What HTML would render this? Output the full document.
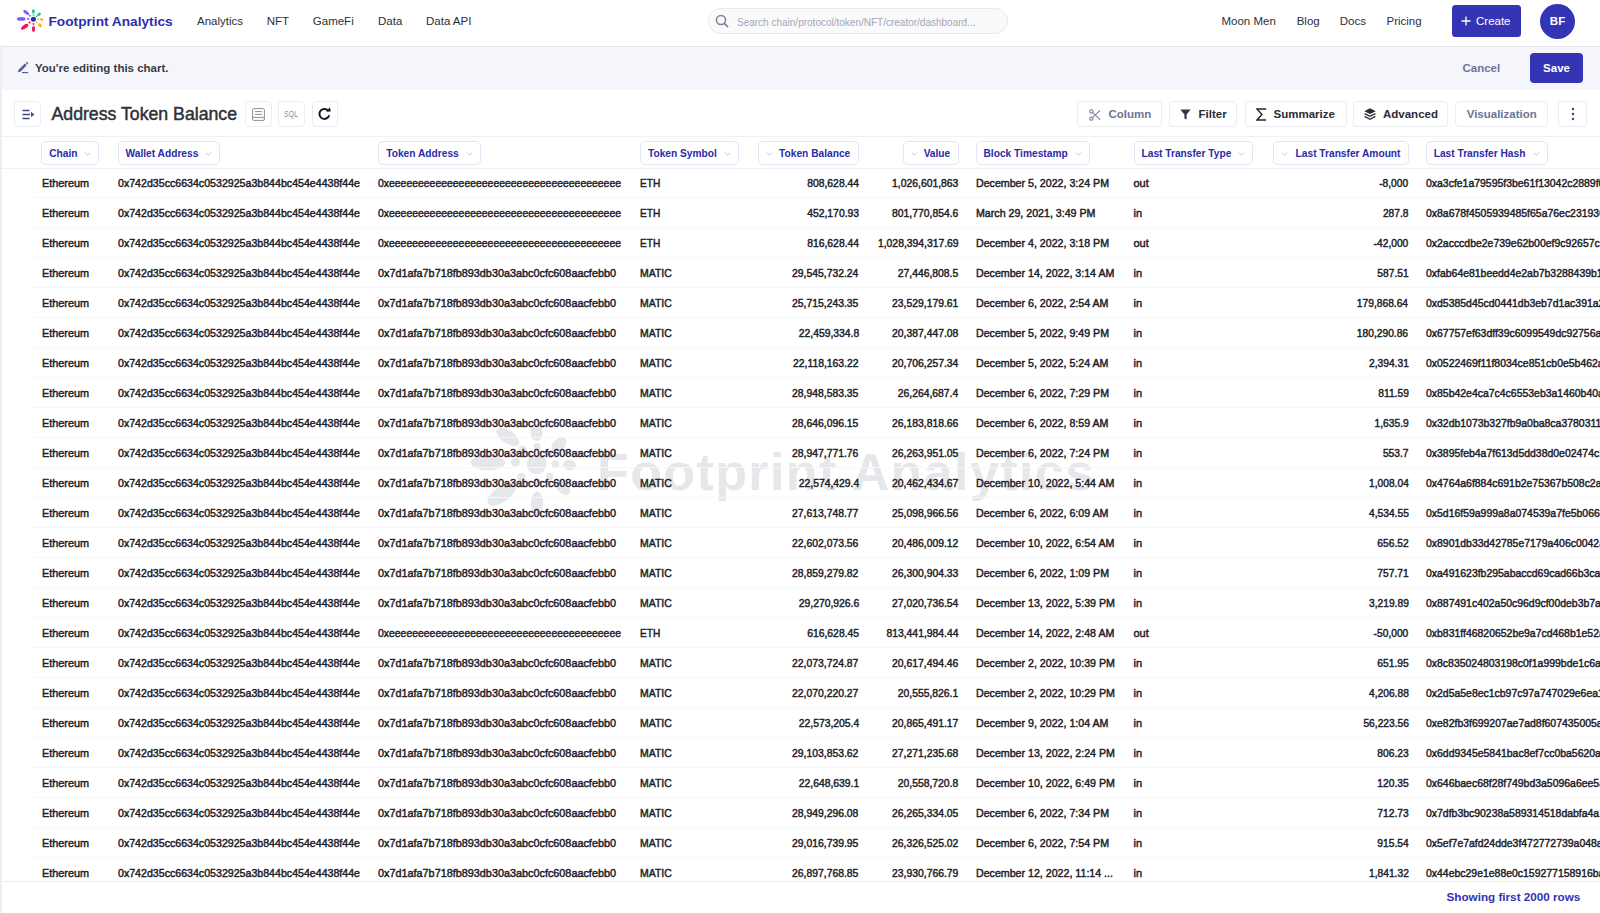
<!DOCTYPE html><html><head><meta charset="utf-8"><style>*{margin:0;padding:0;box-sizing:border-box}
html,body{width:1600px;height:913px;overflow:hidden;background:#fff;font-family:"Liberation Sans",sans-serif;position:relative}
.abs{position:absolute}
#nav{position:absolute;left:0;top:0;width:1600px;height:47px;background:#fff;border-bottom:1px solid #e6e7eb}
.nv{position:absolute;top:14px;font-size:11.5px;line-height:14px;color:#2c2f38;white-space:nowrap}
#banner{position:absolute;left:0;top:47px;width:1600px;height:43px;background:#f5f6fc}
#leftstrip{position:absolute;left:0;top:47px;width:1.6px;height:866px;background:#eeeff4}
#titlebar{position:absolute;left:2px;top:90px;width:1598px;height:47px;background:#fff;border-bottom:1px solid #f0f0f3}
.ib{position:absolute;top:100.5px;width:26.5px;height:26.5px;border:1px solid #ececf2;border-radius:4px;background:#fff}
.tb{position:absolute;top:101px;height:26px;border:1px solid #ebebf2;border-radius:4px;background:#fff;font-size:11.5px;font-weight:bold;line-height:24px;white-space:nowrap}
.hb{position:absolute;top:141px;height:24px;border:1px solid #e4e4f7;border-radius:5px;background:#fff}
.ht{position:absolute;top:4.7px;font-size:10.2px;font-weight:bold;line-height:14px;color:#2a2aaa;white-space:nowrap}
.hc{position:absolute;top:8.6px;line-height:0}
#hdrline{position:absolute;left:2px;top:168px;width:1598px;height:1px;background:#f2f2f5}
.row{position:absolute;left:33px;width:1567px;height:30px;border-bottom:1px solid #f7f7f9}
.c{position:absolute;top:0;font-size:11px;line-height:30px;color:#1e2028;white-space:nowrap;-webkit-text-stroke:0.45px #1e2028}
.row .c{margin-left:-33px}
#clipper{position:absolute;left:0;top:169px;width:1600px;height:712px;overflow:hidden}
#footer{position:absolute;left:2px;top:881px;width:1598px;height:32px;background:#fff;border-top:1px solid #ececf0}
.tbt{top:107px;font-size:11.5px;font-weight:bold;line-height:14px;white-space:nowrap}
</style></head><body>
<div id="nav">
 <svg class="abs" style="left:14px;top:5px" width="32" height="30" viewBox="0 0 32 30"><ellipse cx="19.40" cy="14.30" rx="2.5" ry="2.5" transform="rotate(0 19.40 14.30)" fill="#2b2ba6"/><ellipse cx="7.20" cy="13.90" rx="4.3" ry="1.9" transform="rotate(0 7.20 13.90)" fill="#7c5cf6"/><ellipse cx="14.10" cy="13.80" rx="1.1" ry="1.1" transform="rotate(0 14.10 13.80)" fill="#7c5cf6"/><ellipse cx="12.20" cy="7.50" rx="3.3" ry="1.6" transform="rotate(35 12.20 7.50)" fill="#7c5cf6"/><ellipse cx="15.90" cy="10.70" rx="1.0" ry="1.0" transform="rotate(0 15.90 10.70)" fill="#7c5cf6"/><ellipse cx="19.40" cy="6.40" rx="1.5" ry="2.2" transform="rotate(0 19.40 6.40)" fill="#1fc9a4"/><ellipse cx="19.50" cy="9.90" rx="0.9" ry="0.9" transform="rotate(0 19.50 9.90)" fill="#1fc9a4"/><ellipse cx="25.00" cy="9.40" rx="2.2" ry="1.4" transform="rotate(-40 25.00 9.40)" fill="#1fc9a4"/><ellipse cx="22.50" cy="11.50" rx="0.9" ry="0.9" transform="rotate(0 22.50 11.50)" fill="#1fc9a4"/><ellipse cx="27.60" cy="14.50" rx="1.6" ry="1.3" transform="rotate(0 27.60 14.50)" fill="#f8b400"/><ellipse cx="24.10" cy="14.30" rx="0.9" ry="0.9" transform="rotate(0 24.10 14.30)" fill="#f8b400"/><ellipse cx="26.00" cy="20.20" rx="2.2" ry="1.4" transform="rotate(45 26.00 20.20)" fill="#f8b400"/><ellipse cx="22.70" cy="17.40" rx="0.9" ry="0.9" transform="rotate(0 22.70 17.40)" fill="#f8b400"/><ellipse cx="19.50" cy="24.10" rx="1.5" ry="3.0" transform="rotate(0 19.50 24.10)" fill="#f5145a"/><ellipse cx="19.50" cy="18.90" rx="1.0" ry="1.0" transform="rotate(0 19.50 18.90)" fill="#f5145a"/><ellipse cx="10.70" cy="21.80" rx="4.2" ry="1.9" transform="rotate(-35 10.70 21.80)" fill="#f5145a"/><ellipse cx="15.60" cy="17.60" rx="1.1" ry="1.1" transform="rotate(0 15.60 17.60)" fill="#f5145a"/></svg>
 <div class="abs" style="left:48.5px;top:13.8px;font-size:13.7px;font-weight:bold;line-height:16px;color:#2e2eae;white-space:nowrap">Footprint Analytics</div>
 <div class="nv" style="left:197px">Analytics</div>
 <div class="nv" style="left:266.7px">NFT</div>
 <div class="nv" style="left:312.8px">GameFi</div>
 <div class="nv" style="left:378px">Data</div>
 <div class="nv" style="left:426px">Data API</div>
 <div class="abs" style="left:708px;top:8px;width:300px;height:26px;border:1px solid #e8e9ee;border-radius:13px;background:#fafafb"></div>
 <svg class="abs" style="left:715px;top:14px" width="14" height="14" viewBox="0 0 14 14"><circle cx="6" cy="6" r="4.6" fill="none" stroke="#7a819a" stroke-width="1.5"/><path d="M9.4 9.4 L12.6 12.6" stroke="#7a819a" stroke-width="1.6" stroke-linecap="round"/></svg>
 <div class="abs" style="left:737px;top:16.5px;font-size:10px;line-height:12px;color:#a3a7b5;white-space:nowrap">Search chain/protocol/token/NFT/creator/dashboard...</div>
 <div class="nv" style="left:1221.5px">Moon Men</div>
 <div class="nv" style="left:1296.7px">Blog</div>
 <div class="nv" style="left:1339.8px">Docs</div>
 <div class="nv" style="left:1386.5px">Pricing</div>
 <div class="abs" style="left:1452px;top:4.8px;width:69px;height:32.2px;background:#3434b4;border-radius:3.5px"></div>
 <svg class="abs" style="left:1461px;top:16px" width="10" height="10" viewBox="0 0 10 10"><path d="M5 0.5V9.5M0.5 5H9.5" stroke="#fff" stroke-width="1.3"/></svg>
 <div class="abs" style="left:1476px;top:14px;font-size:11.5px;line-height:14px;color:#fff;white-space:nowrap">Create</div>
 <div class="abs" style="left:1540px;top:3.75px;width:35px;height:35px;border-radius:50%;background:#3434b4"></div>
 <div class="abs" style="left:1540px;top:14px;width:35px;text-align:center;font-size:11.5px;font-weight:bold;line-height:14px;color:#fff">BF</div>
</div>
<div id="banner">
 <svg class="abs" style="left:17px;top:14px" width="13" height="13" viewBox="0 0 13 13"><path d="M1 11.3 L1.5 8.8 L7.9 2.4 L9.8 4.3 L3.4 10.7 Z" fill="#56618c"/><path d="M8.7 1.6 L9.6 0.7 L11.5 2.6 L10.6 3.5 Z" fill="#56618c"/><path d="M5 11.6 H11.2" stroke="#56618c" stroke-width="1.2"/></svg>
 <div class="abs" style="left:35px;top:15px;font-size:11.5px;font-weight:bold;line-height:13px;color:#3a3c44;white-space:nowrap">You're editing this chart.</div>
 <div class="abs" style="left:1462.5px;top:15px;font-size:11.5px;font-weight:bold;line-height:13px;color:#6b7796;white-space:nowrap">Cancel</div>
 <div class="abs" style="left:1530px;top:6px;width:53px;height:30px;background:#3434b4;border-radius:4px"></div>
 <div class="abs" style="left:1530px;top:15px;width:53px;text-align:center;font-size:11.5px;font-weight:bold;line-height:13px;color:#fff">Save</div>
</div>
<div id="leftstrip"></div>
<div id="titlebar"></div>
<div class="ib" style="left:14px"></div>
<svg class="abs" style="left:21.5px;top:108.5px" width="14" height="12" viewBox="0 0 14 12"><path d="M0.5 1.5H7.5M0.5 5.5H8M0.5 9.5H7.5" stroke="#3b4a8a" stroke-width="1.3"/><path d="M9 3 L12.5 5.5 L9 8 Z" fill="#3b4a8a"/></svg>
<div class="abs" style="left:51.5px;top:104px;font-size:17.7px;line-height:20px;color:#2f3036;white-space:nowrap;-webkit-text-stroke:0.45px #2f3036">Address Token Balance</div>
<div class="ib" style="left:245px"></div>
<svg class="abs" style="left:252px;top:108px" width="13" height="13" viewBox="0 0 13 13"><rect x="0.6" y="0.6" width="11.8" height="11.8" rx="1.2" fill="none" stroke="#8e8e98" stroke-width="1"/><path d="M3 3.6H10M3 6.4H10M0.6 9.4H12.4" stroke="#8e8e98" stroke-width="1"/></svg>
<div class="ib" style="left:278.2px"></div>
<div class="abs" style="left:284px;top:110px;font-size:8.5px;line-height:9px;color:#8e8e98;white-space:nowrap;transform:scaleX(0.8);transform-origin:0 0;letter-spacing:0.2px">SQL</div>
<div class="ib" style="left:311.5px"></div>
<svg class="abs" style="left:317px;top:106px" width="15" height="15" viewBox="0 0 15 15"><path d="M11.6 5.2 A5 5 0 1 0 12.2 9.3" fill="none" stroke="#141a2a" stroke-width="2"/><path d="M9.2 5.6 L13.8 5.6 L12.9 1.2 Z" fill="#141a2a"/></svg>
<div class="tb" style="left:1077.3px;width:85px;color:#6b7596"></div>
<svg class="abs" style="left:1088.8px;top:108.5px" width="12" height="12" viewBox="0 0 13 13"><circle cx="2.6" cy="2.6" r="1.8" fill="none" stroke="#6b7596" stroke-width="1.1"/><circle cx="2.6" cy="10.4" r="1.8" fill="none" stroke="#6b7596" stroke-width="1.1"/><path d="M4 3.8 L12 11.5 M4 9.2 L12 1.5" stroke="#6b7596" stroke-width="1.1"/></svg>
<div class="abs tbt" style="left:1108.5px;color:#6b7596">Column</div>
<div class="tb" style="left:1169.4px;width:68px"></div>
<svg class="abs" style="left:1180px;top:109px" width="11" height="11" viewBox="0 0 11 11"><path d="M0.3 0.5 H10.7 L6.6 5.4 V10.5 L4.4 9.5 V5.4 Z" fill="#34363e"/></svg>
<div class="abs tbt" style="left:1198.6px;color:#2a2c34">Filter</div>
<div class="tb" style="left:1244.5px;width:102px"></div>
<svg class="abs" style="left:1255.5px;top:107.5px" width="11" height="13" viewBox="0 0 11 13"><path d="M10.2 1H1 L6 6.5 L1 12H10.2" fill="none" stroke="#24262e" stroke-width="1.4"/></svg>
<div class="abs tbt" style="left:1273.5px;color:#2a2c34">Summarize</div>
<div class="tb" style="left:1353.3px;width:95px"></div>
<svg class="abs" style="left:1363.5px;top:108px" width="12" height="12" viewBox="0 0 12 12"><path d="M6 0.3 L11.7 3.2 L6 6.1 L0.3 3.2 Z" fill="#2a2c34"/><path d="M0.6 5.6 L6 8.4 L11.4 5.6" fill="none" stroke="#2a2c34" stroke-width="1.2"/><path d="M0.6 8.4 L6 11.2 L11.4 8.4" fill="none" stroke="#2a2c34" stroke-width="1.2"/></svg>
<div class="abs tbt" style="left:1383px;color:#2a2c34">Advanced</div>
<div class="tb" style="left:1455.4px;width:93px"></div>
<div class="abs tbt" style="left:1466.7px;color:#6b7596">Visualization</div>
<div class="tb" style="left:1558px;width:29px"></div>
<svg class="abs" style="left:1570.5px;top:107px" width="4" height="14" viewBox="0 0 4 14"><circle cx="2" cy="2" r="1.2" fill="#3b4470"/><circle cx="2" cy="7" r="1.2" fill="#3b4470"/><circle cx="2" cy="12" r="1.2" fill="#3b4470"/></svg>
<svg class="abs" style="left:458.9px;top:407.3px" width="128" height="120" viewBox="0 0 32 30" style="overflow:visible"><g transform="scale(1)"><ellipse cx="19.40" cy="14.30" rx="2.5" ry="2.5" transform="rotate(0 19.40 14.30)" fill="#e6e7ea"/><ellipse cx="7.20" cy="13.90" rx="4.3" ry="1.9" transform="rotate(0 7.20 13.90)" fill="#e6e7ea"/><ellipse cx="14.10" cy="13.80" rx="1.1" ry="1.1" transform="rotate(0 14.10 13.80)" fill="#e6e7ea"/><ellipse cx="12.20" cy="7.50" rx="3.3" ry="1.6" transform="rotate(35 12.20 7.50)" fill="#e6e7ea"/><ellipse cx="15.90" cy="10.70" rx="1.0" ry="1.0" transform="rotate(0 15.90 10.70)" fill="#e6e7ea"/><ellipse cx="19.40" cy="6.40" rx="1.5" ry="2.2" transform="rotate(0 19.40 6.40)" fill="#e6e7ea"/><ellipse cx="19.50" cy="9.90" rx="0.9" ry="0.9" transform="rotate(0 19.50 9.90)" fill="#e6e7ea"/><ellipse cx="25.00" cy="9.40" rx="2.2" ry="1.4" transform="rotate(-40 25.00 9.40)" fill="#e6e7ea"/><ellipse cx="22.50" cy="11.50" rx="0.9" ry="0.9" transform="rotate(0 22.50 11.50)" fill="#e6e7ea"/><ellipse cx="27.60" cy="14.50" rx="1.6" ry="1.3" transform="rotate(0 27.60 14.50)" fill="#e6e7ea"/><ellipse cx="24.10" cy="14.30" rx="0.9" ry="0.9" transform="rotate(0 24.10 14.30)" fill="#e6e7ea"/><ellipse cx="26.00" cy="20.20" rx="2.2" ry="1.4" transform="rotate(45 26.00 20.20)" fill="#e6e7ea"/><ellipse cx="22.70" cy="17.40" rx="0.9" ry="0.9" transform="rotate(0 22.70 17.40)" fill="#e6e7ea"/><ellipse cx="19.50" cy="24.10" rx="1.5" ry="3.0" transform="rotate(0 19.50 24.10)" fill="#e6e7ea"/><ellipse cx="19.50" cy="18.90" rx="1.0" ry="1.0" transform="rotate(0 19.50 18.90)" fill="#e6e7ea"/><ellipse cx="10.70" cy="21.80" rx="4.2" ry="1.9" transform="rotate(-35 10.70 21.80)" fill="#e6e7ea"/><ellipse cx="15.60" cy="17.60" rx="1.1" ry="1.1" transform="rotate(0 15.60 17.60)" fill="#e6e7ea"/></g></svg>
<div class="abs" style="left:597px;top:444px;font-size:52px;font-weight:bold;line-height:56px;color:#e6e7ea;white-space:nowrap;letter-spacing:1.4px">Footprint Analytics</div>

<div class="hb" style="left:41.25px;width:57.25px"><span class="ht" style="left:7px">Chain</span><span class="hc" style="right:7px"><svg class="chev" width="7" height="4" viewBox="0 0 7 4"><path d="M0.8 0.6 L3.5 3.2 L6.2 0.6" fill="none" stroke="#c4c4e0" stroke-width="1"/></svg></span></div>
<div class="hb" style="left:117.5px;width:102.5px"><span class="ht" style="left:7px">Wallet Address</span><span class="hc" style="right:7px"><svg class="chev" width="7" height="4" viewBox="0 0 7 4"><path d="M0.8 0.6 L3.5 3.2 L6.2 0.6" fill="none" stroke="#c4c4e0" stroke-width="1"/></svg></span></div>
<div class="hb" style="left:378.25px;width:102.25px"><span class="ht" style="left:7px">Token Address</span><span class="hc" style="right:7px"><svg class="chev" width="7" height="4" viewBox="0 0 7 4"><path d="M0.8 0.6 L3.5 3.2 L6.2 0.6" fill="none" stroke="#c4c4e0" stroke-width="1"/></svg></span></div>
<div class="hb" style="left:640px;width:98.75px"><span class="ht" style="left:7px">Token Symbol</span><span class="hc" style="right:7px"><svg class="chev" width="7" height="4" viewBox="0 0 7 4"><path d="M0.8 0.6 L3.5 3.2 L6.2 0.6" fill="none" stroke="#c4c4e0" stroke-width="1"/></svg></span></div>
<div class="hb" style="left:758px;width:100.75px"><span class="hc" style="left:7px"><svg class="chev" width="7" height="4" viewBox="0 0 7 4"><path d="M0.8 0.6 L3.5 3.2 L6.2 0.6" fill="none" stroke="#c4c4e0" stroke-width="1"/></svg></span><span class="ht" style="right:7.5px">Token Balance</span></div>
<div class="hb" style="left:902.5px;width:56.25px"><span class="hc" style="left:7px"><svg class="chev" width="7" height="4" viewBox="0 0 7 4"><path d="M0.8 0.6 L3.5 3.2 L6.2 0.6" fill="none" stroke="#c4c4e0" stroke-width="1"/></svg></span><span class="ht" style="right:7.5px">Value</span></div>
<div class="hb" style="left:975.5px;width:114.0px"><span class="ht" style="left:7px">Block Timestamp</span><span class="hc" style="right:7px"><svg class="chev" width="7" height="4" viewBox="0 0 7 4"><path d="M0.8 0.6 L3.5 3.2 L6.2 0.6" fill="none" stroke="#c4c4e0" stroke-width="1"/></svg></span></div>
<div class="hb" style="left:1133.5px;width:119.5px"><span class="ht" style="left:7px">Last Transfer Type</span><span class="hc" style="right:7px"><svg class="chev" width="7" height="4" viewBox="0 0 7 4"><path d="M0.8 0.6 L3.5 3.2 L6.2 0.6" fill="none" stroke="#c4c4e0" stroke-width="1"/></svg></span></div>
<div class="hb" style="left:1272.5px;width:136.5px"><span class="hc" style="left:7px"><svg class="chev" width="7" height="4" viewBox="0 0 7 4"><path d="M0.8 0.6 L3.5 3.2 L6.2 0.6" fill="none" stroke="#c4c4e0" stroke-width="1"/></svg></span><span class="ht" style="right:7.5px">Last Transfer Amount</span></div>
<div class="hb" style="left:1425.7px;width:122.29999999999995px"><span class="ht" style="left:7px">Last Transfer Hash</span><span class="hc" style="right:7px"><svg class="chev" width="7" height="4" viewBox="0 0 7 4"><path d="M0.8 0.6 L3.5 3.2 L6.2 0.6" fill="none" stroke="#c4c4e0" stroke-width="1"/></svg></span></div>
<div id="hdrline"></div>
<div class="row" style="top:168px">
<span class="c" style="left:42px;transform:scaleX(0.985);transform-origin:0 50%">Ethereum</span>
<span class="c" style="left:117.5px;transform:scaleX(0.965);transform-origin:0 50%">0x742d35cc6634c0532925a3b844bc454e4438f44e</span>
<span class="c" style="left:378px;transform:scaleX(0.948);transform-origin:0 50%">0xeeeeeeeeeeeeeeeeeeeeeeeeeeeeeeeeeeeeeeee</span>
<span class="c" style="left:640px;transform:scaleX(0.923);transform-origin:0 50%">ETH</span>
<span class="c" style="right:741.25px;transform:scaleX(0.942);transform-origin:100% 50%">808,628.44</span>
<span class="c" style="right:641.5px;transform:scaleX(0.942);transform-origin:100% 50%">1,026,601,863</span>
<span class="c" style="left:975.5px;transform:scaleX(0.967);transform-origin:0 50%">December 5, 2022, 3:24 PM</span>
<span class="c" style="left:1133.5px;transform:scaleX(1.0);transform-origin:0 50%">out</span>
<span class="c" style="right:191.5px;transform:scaleX(0.93);transform-origin:100% 50%">-8,000</span>
<span class="c" style="left:1425.7px;transform:scaleX(0.95);transform-origin:0 50%">0xa3cfe1a79595f3be61f13042c2889f0b</span>
</div>
<div class="row" style="top:198px">
<span class="c" style="left:42px;transform:scaleX(0.985);transform-origin:0 50%">Ethereum</span>
<span class="c" style="left:117.5px;transform:scaleX(0.965);transform-origin:0 50%">0x742d35cc6634c0532925a3b844bc454e4438f44e</span>
<span class="c" style="left:378px;transform:scaleX(0.948);transform-origin:0 50%">0xeeeeeeeeeeeeeeeeeeeeeeeeeeeeeeeeeeeeeeee</span>
<span class="c" style="left:640px;transform:scaleX(0.923);transform-origin:0 50%">ETH</span>
<span class="c" style="right:741.25px;transform:scaleX(0.942);transform-origin:100% 50%">452,170.93</span>
<span class="c" style="right:641.5px;transform:scaleX(0.942);transform-origin:100% 50%">801,770,854.6</span>
<span class="c" style="left:975.5px;transform:scaleX(0.967);transform-origin:0 50%">March 29, 2021, 3:49 PM</span>
<span class="c" style="left:1133.5px;transform:scaleX(1.0);transform-origin:0 50%">in</span>
<span class="c" style="right:191.5px;transform:scaleX(0.93);transform-origin:100% 50%">287.8</span>
<span class="c" style="left:1425.7px;transform:scaleX(0.95);transform-origin:0 50%">0x8a678f4505939485f65a76ec231930ab</span>
</div>
<div class="row" style="top:228px">
<span class="c" style="left:42px;transform:scaleX(0.985);transform-origin:0 50%">Ethereum</span>
<span class="c" style="left:117.5px;transform:scaleX(0.965);transform-origin:0 50%">0x742d35cc6634c0532925a3b844bc454e4438f44e</span>
<span class="c" style="left:378px;transform:scaleX(0.948);transform-origin:0 50%">0xeeeeeeeeeeeeeeeeeeeeeeeeeeeeeeeeeeeeeeee</span>
<span class="c" style="left:640px;transform:scaleX(0.923);transform-origin:0 50%">ETH</span>
<span class="c" style="right:741.25px;transform:scaleX(0.942);transform-origin:100% 50%">816,628.44</span>
<span class="c" style="right:641.5px;transform:scaleX(0.942);transform-origin:100% 50%">1,028,394,317.69</span>
<span class="c" style="left:975.5px;transform:scaleX(0.967);transform-origin:0 50%">December 4, 2022, 3:18 PM</span>
<span class="c" style="left:1133.5px;transform:scaleX(1.0);transform-origin:0 50%">out</span>
<span class="c" style="right:191.5px;transform:scaleX(0.93);transform-origin:100% 50%">-42,000</span>
<span class="c" style="left:1425.7px;transform:scaleX(0.95);transform-origin:0 50%">0x2acccdbe2e739e62b00ef9c92657c1ab</span>
</div>
<div class="row" style="top:258px">
<span class="c" style="left:42px;transform:scaleX(0.985);transform-origin:0 50%">Ethereum</span>
<span class="c" style="left:117.5px;transform:scaleX(0.965);transform-origin:0 50%">0x742d35cc6634c0532925a3b844bc454e4438f44e</span>
<span class="c" style="left:378px;transform:scaleX(0.985);transform-origin:0 50%">0x7d1afa7b718fb893db30a3abc0cfc608aacfebb0</span>
<span class="c" style="left:640px;transform:scaleX(0.95);transform-origin:0 50%">MATIC</span>
<span class="c" style="right:741.25px;transform:scaleX(0.942);transform-origin:100% 50%">29,545,732.24</span>
<span class="c" style="right:641.5px;transform:scaleX(0.942);transform-origin:100% 50%">27,446,808.5</span>
<span class="c" style="left:975.5px;transform:scaleX(0.967);transform-origin:0 50%">December 14, 2022, 3:14 AM</span>
<span class="c" style="left:1133.5px;transform:scaleX(1.0);transform-origin:0 50%">in</span>
<span class="c" style="right:191.5px;transform:scaleX(0.93);transform-origin:100% 50%">587.51</span>
<span class="c" style="left:1425.7px;transform:scaleX(0.95);transform-origin:0 50%">0xfab64e81beedd4e2ab7b3288439b1c2d</span>
</div>
<div class="row" style="top:288px">
<span class="c" style="left:42px;transform:scaleX(0.985);transform-origin:0 50%">Ethereum</span>
<span class="c" style="left:117.5px;transform:scaleX(0.965);transform-origin:0 50%">0x742d35cc6634c0532925a3b844bc454e4438f44e</span>
<span class="c" style="left:378px;transform:scaleX(0.985);transform-origin:0 50%">0x7d1afa7b718fb893db30a3abc0cfc608aacfebb0</span>
<span class="c" style="left:640px;transform:scaleX(0.95);transform-origin:0 50%">MATIC</span>
<span class="c" style="right:741.25px;transform:scaleX(0.942);transform-origin:100% 50%">25,715,243.35</span>
<span class="c" style="right:641.5px;transform:scaleX(0.942);transform-origin:100% 50%">23,529,179.61</span>
<span class="c" style="left:975.5px;transform:scaleX(0.967);transform-origin:0 50%">December 6, 2022, 2:54 AM</span>
<span class="c" style="left:1133.5px;transform:scaleX(1.0);transform-origin:0 50%">in</span>
<span class="c" style="right:191.5px;transform:scaleX(0.93);transform-origin:100% 50%">179,868.64</span>
<span class="c" style="left:1425.7px;transform:scaleX(0.95);transform-origin:0 50%">0xd5385d45cd0441db3eb7d1ac391a2b3c</span>
</div>
<div class="row" style="top:318px">
<span class="c" style="left:42px;transform:scaleX(0.985);transform-origin:0 50%">Ethereum</span>
<span class="c" style="left:117.5px;transform:scaleX(0.965);transform-origin:0 50%">0x742d35cc6634c0532925a3b844bc454e4438f44e</span>
<span class="c" style="left:378px;transform:scaleX(0.985);transform-origin:0 50%">0x7d1afa7b718fb893db30a3abc0cfc608aacfebb0</span>
<span class="c" style="left:640px;transform:scaleX(0.95);transform-origin:0 50%">MATIC</span>
<span class="c" style="right:741.25px;transform:scaleX(0.942);transform-origin:100% 50%">22,459,334.8</span>
<span class="c" style="right:641.5px;transform:scaleX(0.942);transform-origin:100% 50%">20,387,447.08</span>
<span class="c" style="left:975.5px;transform:scaleX(0.967);transform-origin:0 50%">December 5, 2022, 9:49 PM</span>
<span class="c" style="left:1133.5px;transform:scaleX(1.0);transform-origin:0 50%">in</span>
<span class="c" style="right:191.5px;transform:scaleX(0.93);transform-origin:100% 50%">180,290.86</span>
<span class="c" style="left:1425.7px;transform:scaleX(0.95);transform-origin:0 50%">0x67757ef63dff39c6099549dc92756a1b</span>
</div>
<div class="row" style="top:348px">
<span class="c" style="left:42px;transform:scaleX(0.985);transform-origin:0 50%">Ethereum</span>
<span class="c" style="left:117.5px;transform:scaleX(0.965);transform-origin:0 50%">0x742d35cc6634c0532925a3b844bc454e4438f44e</span>
<span class="c" style="left:378px;transform:scaleX(0.985);transform-origin:0 50%">0x7d1afa7b718fb893db30a3abc0cfc608aacfebb0</span>
<span class="c" style="left:640px;transform:scaleX(0.95);transform-origin:0 50%">MATIC</span>
<span class="c" style="right:741.25px;transform:scaleX(0.942);transform-origin:100% 50%">22,118,163.22</span>
<span class="c" style="right:641.5px;transform:scaleX(0.942);transform-origin:100% 50%">20,706,257.34</span>
<span class="c" style="left:975.5px;transform:scaleX(0.967);transform-origin:0 50%">December 5, 2022, 5:24 AM</span>
<span class="c" style="left:1133.5px;transform:scaleX(1.0);transform-origin:0 50%">in</span>
<span class="c" style="right:191.5px;transform:scaleX(0.93);transform-origin:100% 50%">2,394.31</span>
<span class="c" style="left:1425.7px;transform:scaleX(0.95);transform-origin:0 50%">0x0522469f11f8034ce851cb0e5b462a1b</span>
</div>
<div class="row" style="top:378px">
<span class="c" style="left:42px;transform:scaleX(0.985);transform-origin:0 50%">Ethereum</span>
<span class="c" style="left:117.5px;transform:scaleX(0.965);transform-origin:0 50%">0x742d35cc6634c0532925a3b844bc454e4438f44e</span>
<span class="c" style="left:378px;transform:scaleX(0.985);transform-origin:0 50%">0x7d1afa7b718fb893db30a3abc0cfc608aacfebb0</span>
<span class="c" style="left:640px;transform:scaleX(0.95);transform-origin:0 50%">MATIC</span>
<span class="c" style="right:741.25px;transform:scaleX(0.942);transform-origin:100% 50%">28,948,583.35</span>
<span class="c" style="right:641.5px;transform:scaleX(0.942);transform-origin:100% 50%">26,264,687.4</span>
<span class="c" style="left:975.5px;transform:scaleX(0.967);transform-origin:0 50%">December 6, 2022, 7:29 PM</span>
<span class="c" style="left:1133.5px;transform:scaleX(1.0);transform-origin:0 50%">in</span>
<span class="c" style="right:191.5px;transform:scaleX(0.93);transform-origin:100% 50%">811.59</span>
<span class="c" style="left:1425.7px;transform:scaleX(0.95);transform-origin:0 50%">0x85b42e4ca7c4c6553eb3a1460b40a1b2</span>
</div>
<div class="row" style="top:408px">
<span class="c" style="left:42px;transform:scaleX(0.985);transform-origin:0 50%">Ethereum</span>
<span class="c" style="left:117.5px;transform:scaleX(0.965);transform-origin:0 50%">0x742d35cc6634c0532925a3b844bc454e4438f44e</span>
<span class="c" style="left:378px;transform:scaleX(0.985);transform-origin:0 50%">0x7d1afa7b718fb893db30a3abc0cfc608aacfebb0</span>
<span class="c" style="left:640px;transform:scaleX(0.95);transform-origin:0 50%">MATIC</span>
<span class="c" style="right:741.25px;transform:scaleX(0.942);transform-origin:100% 50%">28,646,096.15</span>
<span class="c" style="right:641.5px;transform:scaleX(0.942);transform-origin:100% 50%">26,183,818.66</span>
<span class="c" style="left:975.5px;transform:scaleX(0.967);transform-origin:0 50%">December 6, 2022, 8:59 AM</span>
<span class="c" style="left:1133.5px;transform:scaleX(1.0);transform-origin:0 50%">in</span>
<span class="c" style="right:191.5px;transform:scaleX(0.93);transform-origin:100% 50%">1,635.9</span>
<span class="c" style="left:1425.7px;transform:scaleX(0.95);transform-origin:0 50%">0x32db1073b327fb9a0ba8ca3780311a2b</span>
</div>
<div class="row" style="top:438px">
<span class="c" style="left:42px;transform:scaleX(0.985);transform-origin:0 50%">Ethereum</span>
<span class="c" style="left:117.5px;transform:scaleX(0.965);transform-origin:0 50%">0x742d35cc6634c0532925a3b844bc454e4438f44e</span>
<span class="c" style="left:378px;transform:scaleX(0.985);transform-origin:0 50%">0x7d1afa7b718fb893db30a3abc0cfc608aacfebb0</span>
<span class="c" style="left:640px;transform:scaleX(0.95);transform-origin:0 50%">MATIC</span>
<span class="c" style="right:741.25px;transform:scaleX(0.942);transform-origin:100% 50%">28,947,771.76</span>
<span class="c" style="right:641.5px;transform:scaleX(0.942);transform-origin:100% 50%">26,263,951.05</span>
<span class="c" style="left:975.5px;transform:scaleX(0.967);transform-origin:0 50%">December 6, 2022, 7:24 PM</span>
<span class="c" style="left:1133.5px;transform:scaleX(1.0);transform-origin:0 50%">in</span>
<span class="c" style="right:191.5px;transform:scaleX(0.93);transform-origin:100% 50%">553.7</span>
<span class="c" style="left:1425.7px;transform:scaleX(0.95);transform-origin:0 50%">0x3895feb4a7f613d5dd38d0e02474c1a2</span>
</div>
<div class="row" style="top:468px">
<span class="c" style="left:42px;transform:scaleX(0.985);transform-origin:0 50%">Ethereum</span>
<span class="c" style="left:117.5px;transform:scaleX(0.965);transform-origin:0 50%">0x742d35cc6634c0532925a3b844bc454e4438f44e</span>
<span class="c" style="left:378px;transform:scaleX(0.985);transform-origin:0 50%">0x7d1afa7b718fb893db30a3abc0cfc608aacfebb0</span>
<span class="c" style="left:640px;transform:scaleX(0.95);transform-origin:0 50%">MATIC</span>
<span class="c" style="right:741.25px;transform:scaleX(0.942);transform-origin:100% 50%">22,574,429.4</span>
<span class="c" style="right:641.5px;transform:scaleX(0.942);transform-origin:100% 50%">20,462,434.67</span>
<span class="c" style="left:975.5px;transform:scaleX(0.967);transform-origin:0 50%">December 10, 2022, 5:44 AM</span>
<span class="c" style="left:1133.5px;transform:scaleX(1.0);transform-origin:0 50%">in</span>
<span class="c" style="right:191.5px;transform:scaleX(0.93);transform-origin:100% 50%">1,008.04</span>
<span class="c" style="left:1425.7px;transform:scaleX(0.95);transform-origin:0 50%">0x4764a6f884c691b2e75367b508c2a1b2</span>
</div>
<div class="row" style="top:498px">
<span class="c" style="left:42px;transform:scaleX(0.985);transform-origin:0 50%">Ethereum</span>
<span class="c" style="left:117.5px;transform:scaleX(0.965);transform-origin:0 50%">0x742d35cc6634c0532925a3b844bc454e4438f44e</span>
<span class="c" style="left:378px;transform:scaleX(0.985);transform-origin:0 50%">0x7d1afa7b718fb893db30a3abc0cfc608aacfebb0</span>
<span class="c" style="left:640px;transform:scaleX(0.95);transform-origin:0 50%">MATIC</span>
<span class="c" style="right:741.25px;transform:scaleX(0.942);transform-origin:100% 50%">27,613,748.77</span>
<span class="c" style="right:641.5px;transform:scaleX(0.942);transform-origin:100% 50%">25,098,966.56</span>
<span class="c" style="left:975.5px;transform:scaleX(0.967);transform-origin:0 50%">December 6, 2022, 6:09 AM</span>
<span class="c" style="left:1133.5px;transform:scaleX(1.0);transform-origin:0 50%">in</span>
<span class="c" style="right:191.5px;transform:scaleX(0.93);transform-origin:100% 50%">4,534.55</span>
<span class="c" style="left:1425.7px;transform:scaleX(0.95);transform-origin:0 50%">0x5d16f59a999a8a074539a7fe5b066a1b</span>
</div>
<div class="row" style="top:528px">
<span class="c" style="left:42px;transform:scaleX(0.985);transform-origin:0 50%">Ethereum</span>
<span class="c" style="left:117.5px;transform:scaleX(0.965);transform-origin:0 50%">0x742d35cc6634c0532925a3b844bc454e4438f44e</span>
<span class="c" style="left:378px;transform:scaleX(0.985);transform-origin:0 50%">0x7d1afa7b718fb893db30a3abc0cfc608aacfebb0</span>
<span class="c" style="left:640px;transform:scaleX(0.95);transform-origin:0 50%">MATIC</span>
<span class="c" style="right:741.25px;transform:scaleX(0.942);transform-origin:100% 50%">22,602,073.56</span>
<span class="c" style="right:641.5px;transform:scaleX(0.942);transform-origin:100% 50%">20,486,009.12</span>
<span class="c" style="left:975.5px;transform:scaleX(0.967);transform-origin:0 50%">December 10, 2022, 6:54 AM</span>
<span class="c" style="left:1133.5px;transform:scaleX(1.0);transform-origin:0 50%">in</span>
<span class="c" style="right:191.5px;transform:scaleX(0.93);transform-origin:100% 50%">656.52</span>
<span class="c" style="left:1425.7px;transform:scaleX(0.95);transform-origin:0 50%">0x8901db33d42785e7179a406c0042a1b2</span>
</div>
<div class="row" style="top:558px">
<span class="c" style="left:42px;transform:scaleX(0.985);transform-origin:0 50%">Ethereum</span>
<span class="c" style="left:117.5px;transform:scaleX(0.965);transform-origin:0 50%">0x742d35cc6634c0532925a3b844bc454e4438f44e</span>
<span class="c" style="left:378px;transform:scaleX(0.985);transform-origin:0 50%">0x7d1afa7b718fb893db30a3abc0cfc608aacfebb0</span>
<span class="c" style="left:640px;transform:scaleX(0.95);transform-origin:0 50%">MATIC</span>
<span class="c" style="right:741.25px;transform:scaleX(0.942);transform-origin:100% 50%">28,859,279.82</span>
<span class="c" style="right:641.5px;transform:scaleX(0.942);transform-origin:100% 50%">26,300,904.33</span>
<span class="c" style="left:975.5px;transform:scaleX(0.967);transform-origin:0 50%">December 6, 2022, 1:09 PM</span>
<span class="c" style="left:1133.5px;transform:scaleX(1.0);transform-origin:0 50%">in</span>
<span class="c" style="right:191.5px;transform:scaleX(0.93);transform-origin:100% 50%">757.71</span>
<span class="c" style="left:1425.7px;transform:scaleX(0.95);transform-origin:0 50%">0xa491623fb295abaccd69cad66b3ca1b2</span>
</div>
<div class="row" style="top:588px">
<span class="c" style="left:42px;transform:scaleX(0.985);transform-origin:0 50%">Ethereum</span>
<span class="c" style="left:117.5px;transform:scaleX(0.965);transform-origin:0 50%">0x742d35cc6634c0532925a3b844bc454e4438f44e</span>
<span class="c" style="left:378px;transform:scaleX(0.985);transform-origin:0 50%">0x7d1afa7b718fb893db30a3abc0cfc608aacfebb0</span>
<span class="c" style="left:640px;transform:scaleX(0.95);transform-origin:0 50%">MATIC</span>
<span class="c" style="right:741.25px;transform:scaleX(0.942);transform-origin:100% 50%">29,270,926.6</span>
<span class="c" style="right:641.5px;transform:scaleX(0.942);transform-origin:100% 50%">27,020,736.54</span>
<span class="c" style="left:975.5px;transform:scaleX(0.967);transform-origin:0 50%">December 13, 2022, 5:39 PM</span>
<span class="c" style="left:1133.5px;transform:scaleX(1.0);transform-origin:0 50%">in</span>
<span class="c" style="right:191.5px;transform:scaleX(0.93);transform-origin:100% 50%">3,219.89</span>
<span class="c" style="left:1425.7px;transform:scaleX(0.95);transform-origin:0 50%">0x887491c402a50c96d9cf00deb3b7a1b2</span>
</div>
<div class="row" style="top:618px">
<span class="c" style="left:42px;transform:scaleX(0.985);transform-origin:0 50%">Ethereum</span>
<span class="c" style="left:117.5px;transform:scaleX(0.965);transform-origin:0 50%">0x742d35cc6634c0532925a3b844bc454e4438f44e</span>
<span class="c" style="left:378px;transform:scaleX(0.948);transform-origin:0 50%">0xeeeeeeeeeeeeeeeeeeeeeeeeeeeeeeeeeeeeeeee</span>
<span class="c" style="left:640px;transform:scaleX(0.923);transform-origin:0 50%">ETH</span>
<span class="c" style="right:741.25px;transform:scaleX(0.942);transform-origin:100% 50%">616,628.45</span>
<span class="c" style="right:641.5px;transform:scaleX(0.942);transform-origin:100% 50%">813,441,984.44</span>
<span class="c" style="left:975.5px;transform:scaleX(0.967);transform-origin:0 50%">December 14, 2022, 2:48 AM</span>
<span class="c" style="left:1133.5px;transform:scaleX(1.0);transform-origin:0 50%">out</span>
<span class="c" style="right:191.5px;transform:scaleX(0.93);transform-origin:100% 50%">-50,000</span>
<span class="c" style="left:1425.7px;transform:scaleX(0.95);transform-origin:0 50%">0xb831ff46820652be9a7cd468b1e52a1b</span>
</div>
<div class="row" style="top:648px">
<span class="c" style="left:42px;transform:scaleX(0.985);transform-origin:0 50%">Ethereum</span>
<span class="c" style="left:117.5px;transform:scaleX(0.965);transform-origin:0 50%">0x742d35cc6634c0532925a3b844bc454e4438f44e</span>
<span class="c" style="left:378px;transform:scaleX(0.985);transform-origin:0 50%">0x7d1afa7b718fb893db30a3abc0cfc608aacfebb0</span>
<span class="c" style="left:640px;transform:scaleX(0.95);transform-origin:0 50%">MATIC</span>
<span class="c" style="right:741.25px;transform:scaleX(0.942);transform-origin:100% 50%">22,073,724.87</span>
<span class="c" style="right:641.5px;transform:scaleX(0.942);transform-origin:100% 50%">20,617,494.46</span>
<span class="c" style="left:975.5px;transform:scaleX(0.967);transform-origin:0 50%">December 2, 2022, 10:39 PM</span>
<span class="c" style="left:1133.5px;transform:scaleX(1.0);transform-origin:0 50%">in</span>
<span class="c" style="right:191.5px;transform:scaleX(0.93);transform-origin:100% 50%">651.95</span>
<span class="c" style="left:1425.7px;transform:scaleX(0.95);transform-origin:0 50%">0x8c835024803198c0f1a999bde1c6a1b2</span>
</div>
<div class="row" style="top:678px">
<span class="c" style="left:42px;transform:scaleX(0.985);transform-origin:0 50%">Ethereum</span>
<span class="c" style="left:117.5px;transform:scaleX(0.965);transform-origin:0 50%">0x742d35cc6634c0532925a3b844bc454e4438f44e</span>
<span class="c" style="left:378px;transform:scaleX(0.985);transform-origin:0 50%">0x7d1afa7b718fb893db30a3abc0cfc608aacfebb0</span>
<span class="c" style="left:640px;transform:scaleX(0.95);transform-origin:0 50%">MATIC</span>
<span class="c" style="right:741.25px;transform:scaleX(0.942);transform-origin:100% 50%">22,070,220.27</span>
<span class="c" style="right:641.5px;transform:scaleX(0.942);transform-origin:100% 50%">20,555,826.1</span>
<span class="c" style="left:975.5px;transform:scaleX(0.967);transform-origin:0 50%">December 2, 2022, 10:29 PM</span>
<span class="c" style="left:1133.5px;transform:scaleX(1.0);transform-origin:0 50%">in</span>
<span class="c" style="right:191.5px;transform:scaleX(0.93);transform-origin:100% 50%">4,206.88</span>
<span class="c" style="left:1425.7px;transform:scaleX(0.95);transform-origin:0 50%">0x2d5a5e8ec1cb97c97a747029e6ea1b2c</span>
</div>
<div class="row" style="top:708px">
<span class="c" style="left:42px;transform:scaleX(0.985);transform-origin:0 50%">Ethereum</span>
<span class="c" style="left:117.5px;transform:scaleX(0.965);transform-origin:0 50%">0x742d35cc6634c0532925a3b844bc454e4438f44e</span>
<span class="c" style="left:378px;transform:scaleX(0.985);transform-origin:0 50%">0x7d1afa7b718fb893db30a3abc0cfc608aacfebb0</span>
<span class="c" style="left:640px;transform:scaleX(0.95);transform-origin:0 50%">MATIC</span>
<span class="c" style="right:741.25px;transform:scaleX(0.942);transform-origin:100% 50%">22,573,205.4</span>
<span class="c" style="right:641.5px;transform:scaleX(0.942);transform-origin:100% 50%">20,865,491.17</span>
<span class="c" style="left:975.5px;transform:scaleX(0.967);transform-origin:0 50%">December 9, 2022, 1:04 AM</span>
<span class="c" style="left:1133.5px;transform:scaleX(1.0);transform-origin:0 50%">in</span>
<span class="c" style="right:191.5px;transform:scaleX(0.93);transform-origin:100% 50%">56,223.56</span>
<span class="c" style="left:1425.7px;transform:scaleX(0.95);transform-origin:0 50%">0xe82fb3f699207ae7ad8f607435005a1b</span>
</div>
<div class="row" style="top:738px">
<span class="c" style="left:42px;transform:scaleX(0.985);transform-origin:0 50%">Ethereum</span>
<span class="c" style="left:117.5px;transform:scaleX(0.965);transform-origin:0 50%">0x742d35cc6634c0532925a3b844bc454e4438f44e</span>
<span class="c" style="left:378px;transform:scaleX(0.985);transform-origin:0 50%">0x7d1afa7b718fb893db30a3abc0cfc608aacfebb0</span>
<span class="c" style="left:640px;transform:scaleX(0.95);transform-origin:0 50%">MATIC</span>
<span class="c" style="right:741.25px;transform:scaleX(0.942);transform-origin:100% 50%">29,103,853.62</span>
<span class="c" style="right:641.5px;transform:scaleX(0.942);transform-origin:100% 50%">27,271,235.68</span>
<span class="c" style="left:975.5px;transform:scaleX(0.967);transform-origin:0 50%">December 13, 2022, 2:24 PM</span>
<span class="c" style="left:1133.5px;transform:scaleX(1.0);transform-origin:0 50%">in</span>
<span class="c" style="right:191.5px;transform:scaleX(0.93);transform-origin:100% 50%">806.23</span>
<span class="c" style="left:1425.7px;transform:scaleX(0.95);transform-origin:0 50%">0x6dd9345e5841bac8ef7cc0ba5620a1b2</span>
</div>
<div class="row" style="top:768px">
<span class="c" style="left:42px;transform:scaleX(0.985);transform-origin:0 50%">Ethereum</span>
<span class="c" style="left:117.5px;transform:scaleX(0.965);transform-origin:0 50%">0x742d35cc6634c0532925a3b844bc454e4438f44e</span>
<span class="c" style="left:378px;transform:scaleX(0.985);transform-origin:0 50%">0x7d1afa7b718fb893db30a3abc0cfc608aacfebb0</span>
<span class="c" style="left:640px;transform:scaleX(0.95);transform-origin:0 50%">MATIC</span>
<span class="c" style="right:741.25px;transform:scaleX(0.942);transform-origin:100% 50%">22,648,639.1</span>
<span class="c" style="right:641.5px;transform:scaleX(0.942);transform-origin:100% 50%">20,558,720.8</span>
<span class="c" style="left:975.5px;transform:scaleX(0.967);transform-origin:0 50%">December 10, 2022, 6:49 PM</span>
<span class="c" style="left:1133.5px;transform:scaleX(1.0);transform-origin:0 50%">in</span>
<span class="c" style="right:191.5px;transform:scaleX(0.93);transform-origin:100% 50%">120.35</span>
<span class="c" style="left:1425.7px;transform:scaleX(0.95);transform-origin:0 50%">0x646baec68f28f749bd3a5096a6ee5a1b</span>
</div>
<div class="row" style="top:798px">
<span class="c" style="left:42px;transform:scaleX(0.985);transform-origin:0 50%">Ethereum</span>
<span class="c" style="left:117.5px;transform:scaleX(0.965);transform-origin:0 50%">0x742d35cc6634c0532925a3b844bc454e4438f44e</span>
<span class="c" style="left:378px;transform:scaleX(0.985);transform-origin:0 50%">0x7d1afa7b718fb893db30a3abc0cfc608aacfebb0</span>
<span class="c" style="left:640px;transform:scaleX(0.95);transform-origin:0 50%">MATIC</span>
<span class="c" style="right:741.25px;transform:scaleX(0.942);transform-origin:100% 50%">28,949,296.08</span>
<span class="c" style="right:641.5px;transform:scaleX(0.942);transform-origin:100% 50%">26,265,334.05</span>
<span class="c" style="left:975.5px;transform:scaleX(0.967);transform-origin:0 50%">December 6, 2022, 7:34 PM</span>
<span class="c" style="left:1133.5px;transform:scaleX(1.0);transform-origin:0 50%">in</span>
<span class="c" style="right:191.5px;transform:scaleX(0.93);transform-origin:100% 50%">712.73</span>
<span class="c" style="left:1425.7px;transform:scaleX(0.95);transform-origin:0 50%">0x7dfb3bc90238a589314518dabfa4a1b2</span>
</div>
<div class="row" style="top:828px">
<span class="c" style="left:42px;transform:scaleX(0.985);transform-origin:0 50%">Ethereum</span>
<span class="c" style="left:117.5px;transform:scaleX(0.965);transform-origin:0 50%">0x742d35cc6634c0532925a3b844bc454e4438f44e</span>
<span class="c" style="left:378px;transform:scaleX(0.985);transform-origin:0 50%">0x7d1afa7b718fb893db30a3abc0cfc608aacfebb0</span>
<span class="c" style="left:640px;transform:scaleX(0.95);transform-origin:0 50%">MATIC</span>
<span class="c" style="right:741.25px;transform:scaleX(0.942);transform-origin:100% 50%">29,016,739.95</span>
<span class="c" style="right:641.5px;transform:scaleX(0.942);transform-origin:100% 50%">26,326,525.02</span>
<span class="c" style="left:975.5px;transform:scaleX(0.967);transform-origin:0 50%">December 6, 2022, 7:54 PM</span>
<span class="c" style="left:1133.5px;transform:scaleX(1.0);transform-origin:0 50%">in</span>
<span class="c" style="right:191.5px;transform:scaleX(0.93);transform-origin:100% 50%">915.54</span>
<span class="c" style="left:1425.7px;transform:scaleX(0.95);transform-origin:0 50%">0x5ef7e7afd24dde3f472772739a048a1b</span>
</div>
<div class="row" style="top:858px">
<span class="c" style="left:42px;transform:scaleX(0.985);transform-origin:0 50%">Ethereum</span>
<span class="c" style="left:117.5px;transform:scaleX(0.965);transform-origin:0 50%">0x742d35cc6634c0532925a3b844bc454e4438f44e</span>
<span class="c" style="left:378px;transform:scaleX(0.985);transform-origin:0 50%">0x7d1afa7b718fb893db30a3abc0cfc608aacfebb0</span>
<span class="c" style="left:640px;transform:scaleX(0.95);transform-origin:0 50%">MATIC</span>
<span class="c" style="right:741.25px;transform:scaleX(0.942);transform-origin:100% 50%">26,897,768.85</span>
<span class="c" style="right:641.5px;transform:scaleX(0.942);transform-origin:100% 50%">23,930,766.79</span>
<span class="c" style="left:975.5px;transform:scaleX(0.967);transform-origin:0 50%">December 12, 2022, 11:14 ...</span>
<span class="c" style="left:1133.5px;transform:scaleX(1.0);transform-origin:0 50%">in</span>
<span class="c" style="right:191.5px;transform:scaleX(0.93);transform-origin:100% 50%">1,841.32</span>
<span class="c" style="left:1425.7px;transform:scaleX(0.95);transform-origin:0 50%">0x44ebc29e1e88e0c159277158916ba1b2</span>
</div>
<div id="footer"><div class="abs" style="left:1444.5px;top:8px;font-size:11.7px;font-weight:bold;line-height:14px;color:#3232b2;white-space:nowrap">Showing first 2000 rows</div></div>

</body></html>
